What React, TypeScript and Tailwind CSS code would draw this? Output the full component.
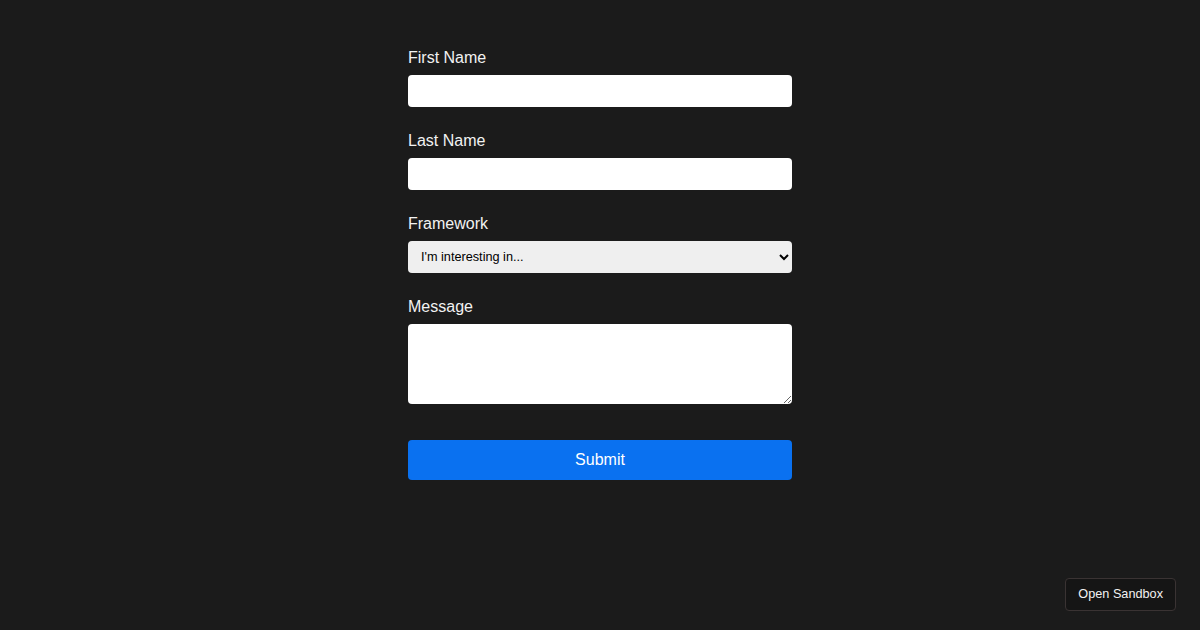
import React from 'react';

const labelCls = 'block text-[16px] leading-[20px] text-[#f2f2f2] mb-[7px]';
const fieldCls = 'block w-full h-[32px] rounded-[4px] bg-white border-0 outline-none px-2 text-[13px] text-black';

export default function App() {
  return (
    <div className="min-h-[630px] w-full bg-[#1b1b1b] font-['Liberation_Sans',Arial,sans-serif] relative">
      <form className="w-[384px] mx-auto pt-[48px]" onSubmit={(e) => e.preventDefault()}>
        {/* First name */}
        <div className="mb-[24px]">
          <label className={labelCls}>First Name</label>
          <input type="text" className={fieldCls} />
        </div>

        {/* Last name */}
        <div className="mb-[24px]">
          <label className={labelCls}>Last Name</label>
          <input type="text" className={fieldCls} />
        </div>

        {/* Framework */}
        <div className="mb-[24px]">
          <label className={labelCls}>Framework</label>
          <select className="block w-full h-[32px] rounded-[4px] bg-[#efefef] border-0 outline-none pl-[9px] pr-[4px] text-[12.7px] text-black font-['Liberation_Sans',Arial,sans-serif]">
            <option>I'm interesting in...</option>
            <option>React</option>
            <option>Vue</option>
            <option>Svelte</option>
          </select>
        </div>

        {/* Message */}
        <div>
          <label className={labelCls}>Message</label>
          <textarea className="block w-full h-[80px] rounded-[4px] bg-white border-0 outline-none p-2 text-[13px] text-black" />
        </div>

        <button
          type="submit"
          className="mt-[36px] w-full h-[40px] rounded-[4px] bg-[#0a71f0] text-white text-[16px]"
        >
          Submit
        </button>
      </form>

      <button className="absolute right-[24px] bottom-[19px] h-[33px] px-[12px] rounded-[4px] bg-[#151515] border border-[#3a3333] text-[12.7px] text-[#f2f2f2]">
        Open Sandbox
      </button>
    </div>
  );
}
